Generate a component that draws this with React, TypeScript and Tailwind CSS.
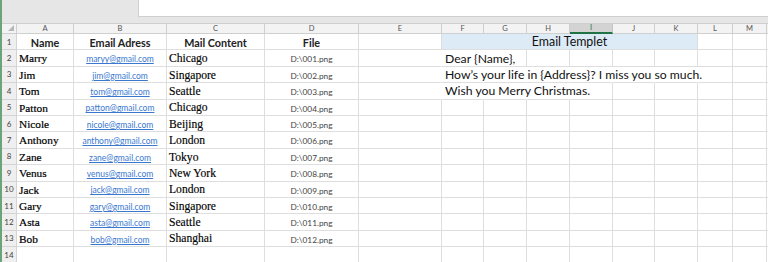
const cols = [
  { key: "A", w: "w-[57px]" },
  { key: "B", w: "w-[93px]" },
  { key: "C", w: "w-[98px]" },
  { key: "D", w: "w-[94px]" },
  { key: "E", w: "w-[83px]" },
  { key: "F", w: "w-[42px]" },
  { key: "G", w: "w-[43px]" },
  { key: "H", w: "w-[43px]" },
  { key: "I", w: "w-[43px]" },
  { key: "J", w: "w-[42px]" },
  { key: "K", w: "w-[43px]" },
  { key: "L", w: "w-[35px]" },
  { key: "M", w: "w-[34px]" },
  { key: "N", w: "w-[60px]" },
];

const people = [
  ["Marry", "maryy@gmail.com", "Chicago"],
  ["Jim", "jim@gmail.com", "Singapore"],
  ["Tom", "tom@gmail.com", "Seattle"],
  ["Patton", "patton@gmail.com", "Chicago"],
  ["Nicole", "nicole@gmail.com", "Beijing"],
  ["Anthony", "anthony@gmail.com", "London"],
  ["Zane", "zane@gmail.com", "Tokyo"],
  ["Venus", "venus@gmail.com", "New York"],
  ["Jack", "jack@gmail.com", "London"],
  ["Gary", "gary@gmail.com", "Singapore"],
  ["Asta", "asta@gmail.com", "Seattle"],
  ["Bob", "bob@gmail.com", "Shanghai"],
];

// template text overflows into the cells to its right, gridlines under it are hidden
const template: Record<number, string> = {
  2: "Dear {Name},",
  3: "How\u2019s your life in {Address}? I miss you so much.",
  4: "Wish you Merry Christmas.",
};
const hiddenRight: Record<number, string[]> = {
  2: ["E", "F"],
  3: ["E", "F", "G", "H", "I", "J", "K"],
  4: ["E", "F", "G", "H"],
};

const serif = "font-['Liberation_Serif',serif]";
const sans = "font-['Lato',sans-serif]";

function RowHead({ n }: { n: number }) {
  return (
    <div className={`w-[15px] shrink-0 h-full bg-[#efefef] border-r border-b border-[#d4d4d4] flex items-center justify-center text-[8px] text-[#444] ${sans}`}>
      {n}
    </div>
  );
}

function Cell({ w, hide, children, className = "" }: { w: string; hide?: boolean; children?: React.ReactNode; className?: string }) {
  return (
    <div className={`${w} shrink-0 h-full border-b border-b-[#dedede] border-r ${hide ? "border-r-transparent" : "border-r-[#dedede]"} flex items-end pb-[1px] whitespace-nowrap overflow-visible ${className}`}>
      {children}
    </div>
  );
}

function DataRow({ n, p }: { n: number; p?: string[] }) {
  const hidden = hiddenRight[n] ?? [];
  const num = String(n - 1).padStart(3, "0");
  return (
    <div className="flex h-[16.4px]">
      <RowHead n={n} />
      {cols.map((c) => {
        const hide = hidden.includes(c.key);
        if (!p) return <Cell key={c.key} w={c.w} hide={hide} />;
        if (c.key === "A")
          return (
            <Cell key={c.key} w={c.w} className={`pl-[2px] text-[11.3px] leading-none text-black [-webkit-text-stroke:0.2px_black] ${serif}`}>
              {p[0]}
            </Cell>
          );
        if (c.key === "B")
          return (
            <Cell key={c.key} w={c.w} className={`justify-center pb-[2px] text-[8.5px] leading-none text-[#3a78cf] underline ${sans}`}>
              {p[1]}
            </Cell>
          );
        if (c.key === "C")
          return (
            <Cell key={c.key} w={c.w} className={`pl-[2px] text-[11.6px] leading-none text-black [-webkit-text-stroke:0.15px_black] ${serif}`}>
              {p[2]}
            </Cell>
          );
        if (c.key === "D")
          return (
            <Cell key={c.key} w={c.w} className={`justify-center pb-[2px] text-[8.3px] leading-none text-[#444] ${sans}`}>
              D:\{num}.png
            </Cell>
          );
        if (c.key === "F" && template[n])
          return (
            <Cell key={c.key} w={c.w} hide={hide} className={`pl-[3px] text-[12.2px] leading-none text-[#111] ${sans}`}>
              {template[n]}
            </Cell>
          );
        return <Cell key={c.key} w={c.w} hide={hide} />;
      })}
    </div>
  );
}

export default function App() {
  const headers: Record<string, string> = { A: "Name", B: "Email Adress", C: "Mail Content", D: "File" };
  return (
    <div className="w-[768px] h-[262px] overflow-hidden bg-white border-l-2 border-[#6aa57a] relative">
      {/* Formula bar area */}
      <div className="flex h-[17px] bg-[#e6e6e6]">
        <div className="w-[136px] shrink-0" />
        <div className="flex-1 bg-white border-l border-b border-[#d0d0d0]" />
      </div>
      <div className="h-[7px] bg-[#e6e6e6] border-b border-[#cfcfcf]" />

      {/* Column letters */}
      <div className={`flex h-[10px] bg-[#f3f3f3] text-[7.5px] text-[#555] ${sans}`}>
        <div className="w-[15px] shrink-0 h-full border-r border-b border-[#cfcfcf] relative">
          <div className="absolute right-[2px] bottom-[2px] w-0 h-0 border-l-[6px] border-l-transparent border-b-[6px] border-b-[#b8b8b8]" />
        </div>
        {cols.map((c) =>
          c.key === "I" ? (
            <div key={c.key} className={`${c.w} shrink-0 h-full bg-[#d3d3d3] border-r border-[#c6c6c6] border-b-2 border-b-[#217346] flex items-center justify-center text-[#217346]`}>
              {c.key}
            </div>
          ) : (
            <div key={c.key} className={`${c.w} shrink-0 h-full border-r border-b border-[#cfcfcf] flex items-center justify-center`}>
              {c.key === "N" ? "" : c.key}
            </div>
          )
        )}
      </div>

      {/* Row 1 */}
      <div className="flex h-[16.4px]">
        <RowHead n={1} />
        {cols.slice(0, 5).map((c) => (
          <Cell key={c.key} w={c.w} className={`justify-center text-[10.8px] leading-none font-bold text-[#222] ${sans}`}>
            {headers[c.key]}
          </Cell>
        ))}
        <div className={`w-[256px] shrink-0 h-full bg-[#ddebf7] border-r border-b border-[#dedede] flex items-end justify-center pb-[1px] text-[12.4px] leading-none text-[#111] ${sans}`}>
          Email Templet
        </div>
        {cols.slice(11).map((c) => (
          <Cell key={c.key} w={c.w} />
        ))}
      </div>

      {people.map((p, i) => (
        <DataRow key={i} n={i + 2} p={p} />
      ))}
      <DataRow n={14} />
    </div>
  );
}
